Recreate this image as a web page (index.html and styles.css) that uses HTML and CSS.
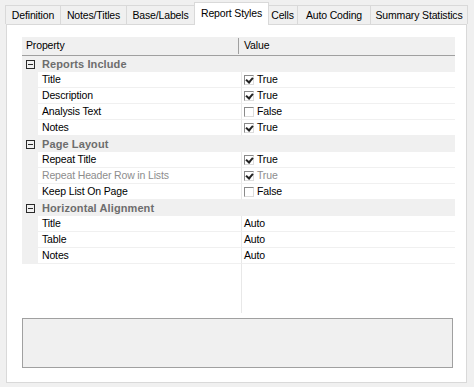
FILE: index.html
```html
<!DOCTYPE html>
<html lang="en">
<head>
    <meta charset="UTF-8">
    <title>Report Styles</title>
    <link rel="stylesheet" href="styles.css">
</head>
<body>
    <div id="tabs">
        <div class="tab t-def">Definition</div>
        <div class="tab t-notes">Notes/Titles</div>
        <div class="tab t-base">Base/Labels</div>
        <div class="tab t-styles active">Report Styles</div>
        <div class="tab t-cells">Cells</div>
        <div class="tab t-auto">Auto Coding</div>
        <div class="tab t-sum">Summary Statistics</div>
    </div>

    <div id="page">
        <div id="grid">
            <div class="head">
                <div class="hcell hprop">Property</div>
                <div class="hcell hval">Value</div>
            </div>

            <div class="cat"><span class="exp"></span>Reports Include</div>
            <div class="row"><span class="gut"></span><span class="prop">Title</span><span class="val"><i class="chk on"></i>True</span></div>
            <div class="row"><span class="gut"></span><span class="prop">Description</span><span class="val"><i class="chk on"></i>True</span></div>
            <div class="row"><span class="gut"></span><span class="prop">Analysis Text</span><span class="val"><i class="chk"></i>False</span></div>
            <div class="row"><span class="gut"></span><span class="prop">Notes</span><span class="val"><i class="chk on"></i>True</span></div>

            <div class="cat"><span class="exp"></span>Page Layout</div>
            <div class="row"><span class="gut"></span><span class="prop">Repeat Title</span><span class="val"><i class="chk on"></i>True</span></div>
            <div class="row off"><span class="gut"></span><span class="prop">Repeat Header Row in Lists</span><span class="val"><i class="chk on"></i>True</span></div>
            <div class="row"><span class="gut"></span><span class="prop">Keep List On Page</span><span class="val"><i class="chk"></i>False</span></div>

            <div class="cat"><span class="exp"></span>Horizontal Alignment</div>
            <div class="row"><span class="gut"></span><span class="prop">Title</span><span class="val">Auto</span></div>
            <div class="row"><span class="gut"></span><span class="prop">Table</span><span class="val">Auto</span></div>
            <div class="row"><span class="gut"></span><span class="prop">Notes</span><span class="val">Auto</span></div>

            <div class="filler"><span class="fprop"></span><span class="fval"></span></div>
        </div>

        <div id="desc"></div>
    </div>
</body>
</html>
```

FILE: styles.css
```css
body {
    font-family: 'Liberation Sans', Arial, sans-serif;
    font-size: 10.5px;
    letter-spacing: -0.15px;
    color: #000;
    margin: 0;
    padding: 0;
    background-color: #f0f0f0;
    width: 474px;
    height: 387px;
    overflow: hidden;
}

#tabs {
    display: flex;
    align-items: flex-end;
    height: 24px;
    padding-left: 5px;
}

.tab {
    flex: none;
    height: 19px;
    line-height: 18px;
    text-align: center;
    border: 1px solid #d9d9d9;
    border-bottom: none;
    border-left: none;
    background-color: #f0f0f0;
    box-sizing: border-box;
    white-space: nowrap;
}

.tab:first-child {
    border-left: 1px solid #d9d9d9;
}

.t-def { width: 56px; }
.t-notes { width: 66px; }
.t-base { width: 68px; }
.t-cells { width: 30px; }
.t-auto { width: 73px; }
.t-sum { width: 97px; }

.tab.active {
    width: 75px;
    height: 23px;
    line-height: 20px;
    margin: 0 -1px 0 -1px;
    background-color: #fff;
    border-left: 1px solid #d9d9d9;
    position: relative;
    top: 1px;
    z-index: 1;
}

#page {
    margin: 0 7px 0 6px;
    height: 359px;
    box-sizing: border-box;
    background-color: #fff;
    border: 1px solid #d9d9d9;
    padding: 12px 10px 0 15px;
    display: flex;
    flex-direction: column;
}

#grid {
    width: 433px;
    height: 276px;
    display: flex;
    flex-direction: column;
}

.head {
    display: flex;
    height: 18px;
    background-color: #f0f0f0;
    border-bottom: 1px solid #a0a0a0;
    flex-shrink: 0;
}

.hcell {
    line-height: 17px;
    padding-left: 4px;
}

.hprop {
    width: 212px;
    border-right: 1px solid #a0a0a0;
    margin: 1px 0;
    line-height: 15px;
}

.hval {
    padding-left: 5px;
}

.cat {
    display: flex;
    align-items: center;
    height: 16px;
    background-color: #f0f0f0;
    color: #6d6d6d;
    font-size: 11px;
    font-weight: bold;
    letter-spacing: 0.1px;
    flex-shrink: 0;
}

.exp {
    width: 9px;
    height: 9px;
    box-sizing: border-box;
    border: 1px solid #2a2a2a;
    margin: 0 7px 0 4px;
    position: relative;
}

.exp::after {
    content: "";
    position: absolute;
    left: 1px;
    top: 3px;
    width: 5px;
    height: 1px;
    background-color: #2a2a2a;
}

.row {
    display: flex;
    height: 16px;
    line-height: 15px;
    flex-shrink: 0;
}

.gut {
    width: 16px;
    background-color: #f0f0f0;
}

.prop {
    width: 199px;
    padding-left: 4px;
    border-right: 1px solid #e8e8e8;
    border-bottom: 1px solid #f0f0f0;
    white-space: nowrap;
}

.val {
    flex: 1;
    padding-left: 2px;
    border-bottom: 1px solid #f0f0f0;
    display: flex;
    align-items: center;
}

.row.off .prop,
.row.off .val {
    color: #8d8d8d;
}

.chk {
    width: 10px;
    height: 10px;
    box-sizing: border-box;
    border: 1px solid #8a8a8a;
    border-right-color: #dcdcdc;
    border-bottom-color: #dcdcdc;
    background-color: #fff;
    margin-right: 3px;
    position: relative;
}

.chk.on::after {
    content: "";
    position: absolute;
    left: 2px;
    top: 0px;
    width: 3px;
    height: 5px;
    border: solid #222;
    border-width: 0 2px 2px 0;
    transform: rotate(40deg);
}

.filler {
    flex: 1;
    display: flex;
}

.fprop {
    width: 219px;
    border-right: 1px solid #e8e8e8;
}

#desc {
    margin-top: 5px;
    width: 431px;
    height: 50px;
    box-sizing: border-box;
    background-color: #f0f0f0;
    border: 1px solid #a0a0a0;
}
```
